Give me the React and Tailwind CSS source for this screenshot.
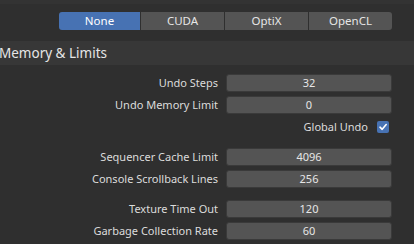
const tabs = ["None", "CUDA", "OptiX", "OpenCL"];

function Field({ label, value }) {
  return (
    <div className="flex h-[18px] items-center">
      <div className="w-[218px] text-right text-[11px] text-[#dcdcdc]">{label}</div>
      <div className="ml-[8px] flex h-[18px] w-[166px] items-center justify-center rounded-[3px] border border-[#3a3a3a] bg-[#545454] text-[11px] text-[#e6e6e6]">
        {value}
      </div>
    </div>
  );
}

function Spacer() {
  return <div className="h-[4px]" />;
}

export default function App() {
  return (
    <div
      className="h-[244px] w-[414px] overflow-hidden bg-[#2f2f2f]"
      style={{ fontFamily: '"Noto Sans", "DejaVu Sans", sans-serif' }}
    >
      <div className="h-[4px] bg-[#333333]" />
      <div className="flex pl-[59px] pt-[8px]">
        {tabs.map((t, i) => (
          <div
            key={t}
            className={
              i === 0
                ? "flex h-[18px] w-[81px] items-center justify-center rounded-l-[3px] bg-[#4772b3] text-[11.5px] text-white"
                : i === 3
                ? "ml-[1px] flex h-[18px] w-[83px] items-center justify-center rounded-r-[3px] bg-[#545454] text-[11.5px] text-[#e6e6e6]"
                : "ml-[1px] flex h-[18px] w-[83px] items-center justify-center bg-[#545454] text-[11.5px] text-[#e6e6e6]"
            }
          >
            {t}
          </div>
        ))}
      </div>
      <div className="mt-[11px] flex h-[24px] items-center bg-[#373737] text-[13.5px] text-[#e6e6e6]">
        <span className="-ml-[1px]">Memory &amp; Limits</span>
      </div>
      <div className="flex flex-col gap-[4px] pt-[9px]">
        <Field label="Undo Steps" value="32" />
        <Field label="Undo Memory Limit" value="0" />
        <div className="flex h-[18px] items-center justify-end pr-[25px]">
          <span className="text-[11px] text-[#dcdcdc]">Global Undo</span>
          <div className="ml-[9px] flex h-[12px] w-[12px] items-center justify-center rounded-[2px] bg-[#4772b3]">
            <svg width="10" height="10" viewBox="0 0 10 10">
              <path d="M2 5.2 L4.2 7.3 L8.2 2.6" fill="none" stroke="white" strokeWidth="1.6" strokeLinecap="round" strokeLinejoin="round" />
            </svg>
          </div>
        </div>
        <Spacer />
        <Field label="Sequencer Cache Limit" value="4096" />
        <Field label="Console Scrollback Lines" value="256" />
        <Spacer />
        <Field label="Texture Time Out" value="120" />
        <Field label="Garbage Collection Rate" value="60" />
      </div>
    </div>
  );
}
